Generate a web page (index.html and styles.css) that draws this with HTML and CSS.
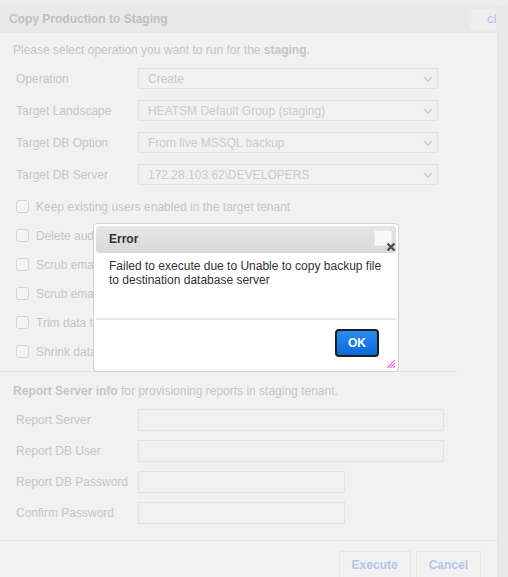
FILE: index.html
```html
<!DOCTYPE html>
<html lang="en">
<head>
    <meta charset="UTF-8">
    <meta name="viewport" content="width=device-width, initial-scale=1.0">
    <title>Copy Production to Staging</title>
    <link rel="stylesheet" href="styles.css">
</head>
<body>
    <div class="screen">
        <div class="topbar"></div>
        <div class="main">
            <div class="dialog">
                <div class="dialog-title">
                    <span>Copy Production to Staging</span>
                    <span class="title-close">close</span>
                </div>
                <div class="dialog-body">
                    <p class="intro">Please select operation you want to run for the <b>staging</b>.</p>
                    <div class="fields">
                        <div class="row">
                            <label>Operation</label>
                            <div class="select">Create
                                <svg width="10" height="6" viewBox="0 0 10 6"><path d="M1 1l4 4 4-4" fill="none" stroke="#cdcdcd" stroke-width="1.5"/></svg>
                            </div>
                        </div>
                        <div class="row">
                            <label>Target Landscape</label>
                            <div class="select">HEATSM Default Group (staging)
                                <svg width="10" height="6" viewBox="0 0 10 6"><path d="M1 1l4 4 4-4" fill="none" stroke="#cdcdcd" stroke-width="1.5"/></svg>
                            </div>
                        </div>
                        <div class="row">
                            <label>Target DB Option</label>
                            <div class="select">From live MSSQL backup
                                <svg width="10" height="6" viewBox="0 0 10 6"><path d="M1 1l4 4 4-4" fill="none" stroke="#cdcdcd" stroke-width="1.5"/></svg>
                            </div>
                        </div>
                        <div class="row">
                            <label>Target DB Server</label>
                            <div class="select">172.28.103.62\DEVELOPERS
                                <svg width="10" height="6" viewBox="0 0 10 6"><path d="M1 1l4 4 4-4" fill="none" stroke="#cdcdcd" stroke-width="1.5"/></svg>
                            </div>
                        </div>
                    </div>

                    <div class="checks">
                        <div class="check"><span class="box"></span>Keep existing users enabled in the target tenant</div>
                        <div class="check"><span class="box"></span>Delete audit history in the target tenant</div>
                        <div class="check"><span class="box"></span>Scrub email addresses of users</div>
                        <div class="check"><span class="box"></span>Scrub email addresses of customers</div>
                        <div class="check"><span class="box"></span>Trim data to the last 90 days</div>
                        <div class="check"><span class="box"></span>Shrink database after copy</div>
                    </div>

                    <hr class="divider">

                    <p class="intro report-intro"><b>Report Server info</b> for provisioning reports in staging tenant.</p>
                    <div class="fields report-fields">
                        <div class="row"><label>Report Server</label><div class="input"></div></div>
                        <div class="row"><label>Report DB User</label><div class="input"></div></div>
                        <div class="row"><label>Report DB Password</label><div class="input short"></div></div>
                        <div class="row"><label>Confirm Password</label><div class="input short"></div></div>
                    </div>
                </div>
                <div class="dialog-footer">
                    <button class="btn">Execute</button>
                    <button class="btn">Cancel</button>
                </div>
            </div>
            <div class="side"></div>
        </div>

        <div class="modal">
            <div class="modal-header">
                Error
                <span class="modal-close"></span>
                <svg class="modal-x" width="10" height="10" viewBox="0 0 10 10"><path d="M1.5 1.5l7 7M8.5 1.5l-7 7" stroke="#505050" stroke-width="2.4"/></svg>
            </div>
            <div class="modal-content">Failed to execute due to Unable to copy backup file to destination database server</div>
            <div class="modal-buttons">
                <button class="ok">OK</button>
            </div>
            <svg class="grip" width="8" height="8" viewBox="0 0 8 8"><path d="M8 0L0 8M8 3L3 8M8 6L6 8" stroke="#e46ad2" stroke-width="1.2"/></svg>
        </div>
    </div>
</body>
</html>
```

FILE: styles.css
```css
body {
    margin: 0;
    font-family: "Liberation Sans", Arial, sans-serif;
    font-size: 12px;
    background: #efefef;
    overflow: hidden;
}
.screen {
    position: relative;
    height: 577px;
    overflow: hidden;
    display: flex;
    flex-direction: column;
}
.topbar {
    height: 5px;
    flex-shrink: 0;
    background: #ededed;
}
.main {
    display: flex;
    flex: 1;
}
.dialog {
    width: 497px;
    display: flex;
    flex-direction: column;
    background: #f1f1f1;
}
.dialog > * {
    flex-shrink: 0;
}
.side {
    flex: 1;
    background: #e9e9e9;
    border-left: 1px solid #e4e4e4;
}
.dialog-title {
    height: 28px;
    display: flex;
    align-items: center;
    justify-content: space-between;
    padding-left: 9px;
    background: #e9e9e9;
    color: #c0c0c0;
    font-weight: bold;
}
.title-close {
    width: 27px;
    height: 20px;
    box-sizing: border-box;
    padding-left: 17px;
    overflow: hidden;
    line-height: 20px;
    background: #eeeeee;
    color: #aec2e6;
    font-weight: normal;
    font-size: 13px;
}
.dialog-body {
    padding: 9px 0 16px 13px;
    border-bottom: 1px solid #e6e6e6;
    color: #c6c6c6;
}
.intro {
    margin: 0 0 10px;
    line-height: 16px;
}
.fields {
    display: grid;
    gap: 11px;
    padding-left: 3px;
}
.row {
    display: flex;
    align-items: center;
}
.row label {
    width: 122px;
}
.select {
    width: 300px;
    height: 21px;
    box-sizing: border-box;
    display: flex;
    align-items: center;
    justify-content: space-between;
    padding: 0 4px 0 9px;
    border: 1px solid #e3e3e3;
    color: #cbcbcb;
}
.checks {
    margin-top: 7px;
    padding-left: 3px;
}
.check {
    height: 29px;
    display: flex;
    align-items: center;
    gap: 7px;
    white-space: nowrap;
}
.box {
    width: 13px;
    height: 13px;
    box-sizing: border-box;
    border: 1px solid #d4d4d4;
    border-radius: 3px;
    background: #f4f4f4;
}
.divider {
    margin: 5px 40px 0 -13px;
    border: 0;
    border-top: 1px solid #e2e2e2;
}
.report-intro {
    margin-top: 11px;
}
.report-fields {
    gap: 9px;
}
.input {
    width: 306px;
    height: 22px;
    box-sizing: border-box;
    border: 1px solid #e3e3e3;
}
.input.short {
    width: 207px;
}
.dialog-footer {
    display: flex;
    justify-content: flex-end;
    gap: 5px;
    padding: 10px 16px 0;
}
.btn {
    height: 28px;
    padding: 0 12px;
    border: 1px solid #e6e6e6;
    background: #f1f1f1;
    color: #b5c7e8;
    font-family: inherit;
    font-size: 12px;
    font-weight: bold;
}

/* error popup on top of the faded dialog */
.modal {
    position: absolute;
    left: 93px;
    top: 223px;
    width: 306px;
    height: 149px;
    box-sizing: border-box;
    padding: 2px;
    background: #fff;
    border: 1px solid #d2d2d2;
    border-radius: 4px;
}
.modal-header {
    position: relative;
    height: 27px;
    line-height: 27px;
    padding-left: 13px;
    border-radius: 3px;
    background: linear-gradient(#e6e6e6, #d9d9d9);
    color: #333;
    font-weight: bold;
}
.modal-close {
    position: absolute;
    left: 278px;
    top: 4px;
    width: 18px;
    height: 16px;
    box-sizing: border-box;
    background: #f9f9f9;
    border: 1px solid #ececec;
    border-radius: 2px;
}
.modal-x {
    position: absolute;
    left: 290px;
    top: 16px;
}
.modal-content {
    height: 65px;
    box-sizing: border-box;
    padding: 6px 13px 0 13px;
    line-height: 14px;
    color: #333;
}
.modal-buttons {
    display: flex;
    justify-content: flex-end;
    padding: 9px 17px 0 0;
    border-top: 2px solid #e9e9e9;
}
.ok {
    width: 44px;
    height: 28px;
    border: 2px solid #1d1d1d;
    border-radius: 4px;
    background: linear-gradient(#2a8cf2, #0a69da);
    color: #fff;
    font-family: inherit;
    font-size: 12px;
    font-weight: bold;
}
.grip {
    position: absolute;
    left: 293px;
    top: 136px;
}
```
